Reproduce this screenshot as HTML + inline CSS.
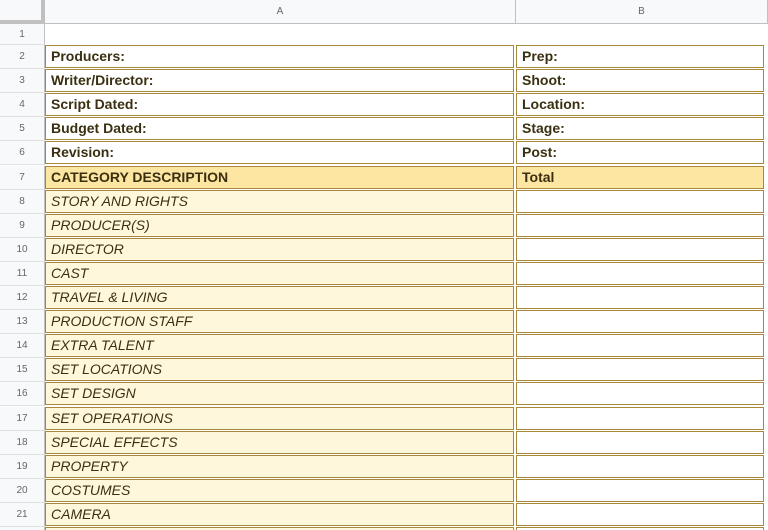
<!DOCTYPE html><html><head><style>
html,body{margin:0;width:768px;height:530px;overflow:hidden;background:#fff;font-family:"Liberation Sans",Arial,sans-serif;position:relative}
.hd{position:absolute;top:0;height:24px;background:#f8f9fa;border-bottom:1px solid #c0c0c0;border-right:1px solid #c0c0c0;box-sizing:border-box;font-size:10px;color:#666;text-align:center;line-height:24px}
.rn{position:absolute;left:0;width:45px;background:#f8f9fa;border-right:1px solid #c0c0c0;border-bottom:1px solid #e0e0e0;box-sizing:border-box;font-size:10px;color:#666;text-align:center}
.c{position:absolute;box-sizing:border-box;border:1.5px solid #a8893c;font-size:14px;color:#3a2f10;padding-left:5px;white-space:nowrap}
.b{font-weight:bold}.i{font-style:italic;background:#fff7dc}
.h{background:#fde6a2;font-weight:bold}
</style></head><body>
<div class="hd" style="left:0;width:45px;border-right:4px solid #c0c0c0;border-bottom:4px solid #c0c0c0"></div>
<div class="hd" style="left:45px;width:471px">A</div>
<div class="hd" style="left:516px;width:252px">B</div>
<div class="rn" style="top:24px;height:21px;line-height:21px">1</div>
<div id="g"></div>
<script>
var L=[["Producers:","Prep:"],["Writer/Director:","Shoot:"],["Script Dated:","Location:"],["Budget Dated:","Stage:"],["Revision:","Post:"],["CATEGORY DESCRIPTION","Total"],
"STORY AND RIGHTS","PRODUCER(S)","DIRECTOR","CAST","TRAVEL & LIVING","PRODUCTION STAFF","EXTRA TALENT","SET LOCATIONS","SET DESIGN","SET OPERATIONS","SPECIAL EFFECTS","PROPERTY","COSTUMES","CAMERA",""];
var h="";
for(var k=0;k<L.length;k++){var r=k+2,t=45+k*24.1;
h+='<div class="rn" style="top:'+t+'px;height:24px;line-height:24px">'+(r<=21?r:'')+'</div>';
var a,b,ca,cb;
if(k<5){a=L[k][0];b=L[k][1];ca="b";cb="b";}
else if(k==5){a=L[k][0];b=L[k][1];ca="h";cb="h";}
else{a=L[k];b="";ca="i";cb="";}
h+='<div class="c '+ca+'" style="left:45px;top:'+t+'px;width:469px;height:23px;line-height:21px">'+a.replace("&","&amp;")+'</div>';
h+='<div class="c '+cb+'" style="left:516px;top:'+t+'px;width:248px;height:23px;line-height:21px">'+b+'</div>';}
document.getElementById("g").innerHTML=h;
</script>
</body></html>
